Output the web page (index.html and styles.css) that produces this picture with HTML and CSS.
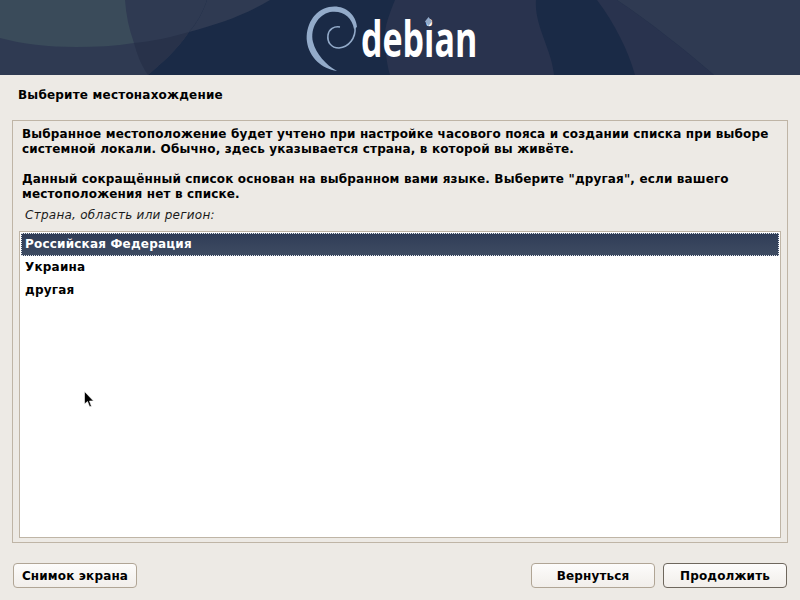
FILE: index.html
```html
<!DOCTYPE html>
<html lang="ru">
<head>
<meta charset="utf-8">
<title>Debian Installer</title>
<link rel="stylesheet" href="styles.css">
</head>
<body>
<header class="banner">
  <svg class="banner-bg" viewBox="0 0 800 75" width="800" height="75">
    <rect width="800" height="75" fill="#1a2a46"/>
    <path d="M0 0H207C203 12 197 23 189 32C177 50 163 62 148 75H0Z" fill="#2f3a52"/>
    <path d="M0 0H125C126 15 129 29 134 43C115 46 96 47 76 47C48 47 22 44 0 38Z" fill="#3a4b5a"/>
    <path d="M134 43C154 41 172 37 189 32C177 50 163 62 148 75C141 65 137 54 134 43Z" fill="#28324a"/>
    <path d="M189 32C220 24 247 14 270 0H207C203 12 197 23 189 32Z" fill="#2f3a52"/>
    <path d="M395 0H536C534 25 552 50 554 75H390C386 62 385 45 385 33C386 22 391 10 395 0Z" fill="#29334e"/>
    <path d="M597 0H617C650 22 685 50 714 75H635C628 50 615 24 597 0Z" fill="#29334e"/>
    <path d="M617 0H800V75H714C685 50 650 22 617 0Z" fill="#2f3a52"/>
    <path class="swirl-fill" d="M357 27C356 13 343 4 329 7C314 10 305 26 307 42C309 57 322 69 337 71C326 65 316 54 313 42C310 28 318 15 330 12C343 10 352 17 354 29Z"/>
    <path class="swirl-line" d="M355 27C356 38 349 47 339 48C331 48 327 42 328 35C329 29 334 26 340 27"/>
  </svg>
  <span class="wordmark">debian</span>
  <svg class="dot" width="9" height="9" viewBox="0 0 9 9"><path d="M4.5 0L8 4.5L4.5 9L1 4.5Z"/></svg>
</header>

<h1 class="title">Выберите местонахождение</h1>

<main class="panel">
  <p class="desc">Выбранное местоположение будет учтено при настройке часового пояса и создании списка при выборе<br>системной локали. Обычно, здесь указывается страна, в которой вы живёте.</p>
  <p class="desc">Данный сокращённый список основан на выбранном вами языке. Выберите "другая", если вашего<br>местоположения нет в списке.</p>
  <p class="label">Страна, область или регион:</p>
  <ul class="list">
    <li class="item selected">Российская Федерация</li>
    <li class="item">Украина</li>
    <li class="item">другая</li>
  </ul>
</main>

<footer class="actions">
  <button class="btn">Снимок экрана</button>
  <div class="actions-right">
    <button class="btn">Вернуться</button>
    <button class="btn btn-default">Продолжить</button>
  </div>
</footer>

<svg class="cursor" width="12" height="18" viewBox="0 0 12 18">
  <path d="M0.5 0.5V13L3.5 10.5L5.5 15.5H7.5L5.5 10H9.5Z" fill="#000" stroke="#fff" stroke-width="0.6"/>
</svg>
</body>
</html>
```
FILE: styles.css
```css
* { box-sizing: border-box; }
html, body { margin: 0; padding: 0; }
body {
  position: relative;
  width: 800px;
  height: 600px;
  overflow: hidden;
  background: #edeae5;
  font-family: "DejaVu Sans", sans-serif;
  font-size: 12px;
  letter-spacing: 0.15px;
  color: #000;
  display: flex;
  flex-direction: column;
}
.banner {
  position: relative;
  height: 75px;
  flex: none;
  background: #1a2a46;
}
.banner-bg { display: block; }
.swirl-fill { fill: #93abca; }
.swirl-line { fill: none; stroke: #93abca; stroke-width: 1.6; }
.wordmark {
  position: absolute;
  left: 361px;
  top: 0;
  font-family: "Open Sans", sans-serif;
  font-weight: 700;
  font-size: 50px;
  letter-spacing: 0;
  line-height: 76px;
  color: #fff;
  transform-origin: left center;
  transform: scaleX(0.68);
  white-space: nowrap;
}
.dot {
  position: absolute;
  left: 424px;
  top: 17px;
  fill: #93abca;
}
.title {
  margin: 13px 0 0 18px;
  height: 32px;
  font-size: 12px;
  font-weight: bold;
  line-height: 15px;
  letter-spacing: 0.2px;
}
.panel {
  margin: 0 12px;
  height: 423px;
  border: 1px solid #bfb5a6;
  padding: 6px 6px 4px;
  display: flex;
  flex-direction: column;
}
.desc {
  margin: 0 0 15px 3px;
  font-weight: bold;
  line-height: 15px;
  white-space: nowrap;
}
.label {
  margin: -9px 0 0 6px;
  height: 23px;
  font-style: italic;
  line-height: 14px;
  letter-spacing: 0.26px;
  color: #1a1a1a;
}
.list {
  list-style: none;
  margin: 0;
  padding: 1px;
  flex: 1;
  background: #fff;
  border: 1px solid #bfb5a6;
  font-weight: bold;
  letter-spacing: 0.2px;
}
.item {
  height: 23px;
  padding: 0 3px;
  line-height: 21px;
  border: 1px solid transparent;
}
.selected {
  color: #fff;
  background: linear-gradient(#303d57, #3e4b62);
  border: 1px dotted #dfe3ea;
}
.actions {
  margin: 20px 13px 0;
  display: flex;
  justify-content: space-between;
}
.actions-right { display: flex; gap: 8px; }
.btn {
  width: 124px;
  height: 25px;
  padding: 0;
  font: bold 12px "DejaVu Sans", sans-serif;
  letter-spacing: 0.15px;
  color: #000;
  background: linear-gradient(#fdfcfb, #f1eeea);
  border: 1px solid #b0a595;
  border-radius: 4px;
}
.btn-default { border-color: #6e675d; }
.cursor {
  position: absolute;
  left: 84px;
  top: 391px;
}
```
